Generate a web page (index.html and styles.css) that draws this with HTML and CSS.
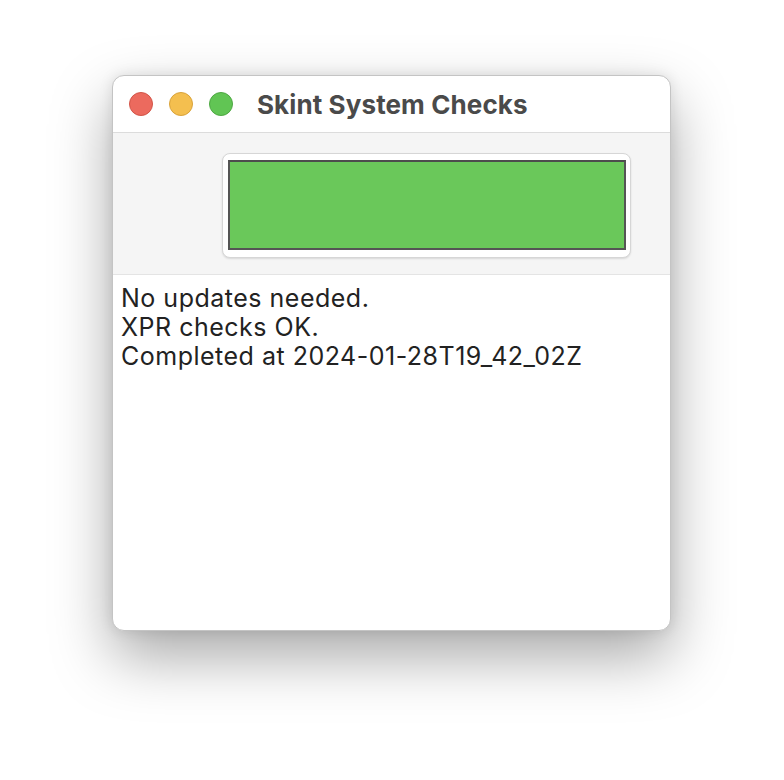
FILE: index.html
```html
<!DOCTYPE html>
<html lang="en">
  <head>
    <meta charset="UTF-8" />
    <meta name="viewport" content="width=device-width, initial-scale=1.0" />
    <link rel="stylesheet" href="styles.css">
    <title>Skint System Checks</title>
  </head>
  <body>
    <div class="window">
      <div class="titlebar">
        <div class="lights">
          <span class="light red"></span>
          <span class="light yellow"></span>
          <span class="light green"></span>
        </div>
        <p class="title">Skint System Checks</p>
      </div>
      <div class="panel">
        <div class="progress">
          <div class="bar"></div>
        </div>
      </div>
      <div class="log">
        <p>No updates needed.</p>
        <p>XPR checks OK.</p>
        <p>Completed at 2024-01-28T19_42_02Z</p>
      </div>
    </div>
  </body>
</html>
```

FILE: styles.css
```css
body {
  background-color: #ffffff;
  font-family: Inter, "Noto Sans", sans-serif;
  margin: 0px;
  padding: 75px 0px 0px 112px;
  height: 780px;
  box-sizing: border-box;
  overflow: hidden;
}

.window {
  width: 559px;
  height: 556px;
  box-sizing: border-box;
  border: 1px solid #c4c4c4;
  border-radius: 12px;
  background-color: #ffffff;
  overflow: hidden;
  display: flex;
  flex-direction: column;
  box-shadow: 0px 26px 60px rgba(0, 0, 0, 0.34), 0px 0px 14px rgba(0, 0, 0, 0.1);
}

/* title bar */
.titlebar {
  height: 56px;
  display: flex;
  align-items: center;
  border-bottom: 1px solid #dcdcdc;
  padding-left: 16px;
  flex-shrink: 0;
}

.lights {
  display: flex;
  gap: 16px;
}

.light {
  width: 24px;
  height: 24px;
  border-radius: 50%;
  box-sizing: border-box;
}

.light.red {
  background-color: #ec6a5e;
  border: 1px solid #d25548;
}

.light.yellow {
  background-color: #f4bf4f;
  border: 1px solid #d9a33b;
}

.light.green {
  background-color: #61c554;
  border: 1px solid #4ea843;
}

.title {
  margin: 0px 0px 0px 24px;
  font-size: 26px;
  font-weight: 700;
  letter-spacing: 0.1px;
  color: #4a4a4a;
}

/* progress area */
.panel {
  background-color: #f5f5f5;
  height: 142px;
  flex-shrink: 0;
  border-bottom: 1px solid #e4e4e4;
  box-sizing: border-box;
  padding: 20px 0px 0px 109px;
}

.progress {
  width: 409px;
  height: 105px;
  box-sizing: border-box;
  background-color: #ffffff;
  border: 1px solid #d6d6d6;
  border-radius: 8px;
  box-shadow: 0px 1px 2px rgba(0, 0, 0, 0.12);
  padding: 6px 4px 7px 5px;
}

.bar {
  height: 100%;
  box-sizing: border-box;
  background-color: #6ac85a;
  border: 2px solid #555555;
  border-top-color: #4d4d4d;
}

/* output text */
.log {
  flex: 1;
  padding: 9px 8px;
  color: #222222;
  font-size: 25px;
  letter-spacing: 0.5px;
  line-height: 29px;

  p {
    margin: 0px;
  }
}
```
